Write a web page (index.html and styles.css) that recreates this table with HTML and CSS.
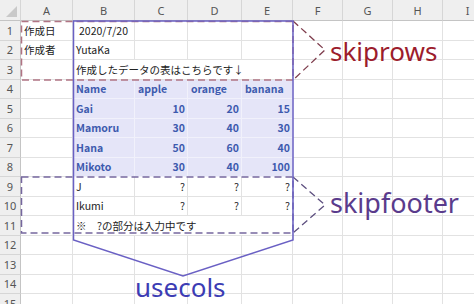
FILE: index.html
```html
<!DOCTYPE html>
<html lang="ja">
<head>
<meta charset="utf-8">
<link rel="stylesheet" href="styles.css">
</head>
<body>
<div class="wrap">
  <div class="sheet">
    <div class="ch corner"></div><div class="ch">A</div><div class="ch">B</div><div class="ch">C</div><div class="ch">D</div><div class="ch">E</div><div class="ch">F</div><div class="ch">G</div><div class="ch">H</div><div class="ch">I</div>

    <div class="rh">1</div><div class="c">作成日</div><div class="c date">2020/7/20</div><div class="c"></div><div class="c"></div><div class="c"></div><div class="c"></div><div class="c"></div><div class="c"></div><div class="c"></div>
    <div class="rh">2</div><div class="c">作成者</div><div class="c">YutaKa</div><div class="c"></div><div class="c"></div><div class="c"></div><div class="c"></div><div class="c"></div><div class="c"></div><div class="c"></div>
    <div class="rh">3</div><div class="c"></div><div class="c span4">作成したデータの表はこちらです↓</div><div class="c"></div><div class="c"></div><div class="c"></div><div class="c"></div>
    <div class="rh">4</div><div class="c"></div><div class="c t b">Name</div><div class="c t b">apple</div><div class="c t b">orange</div><div class="c t b">banana</div><div class="c"></div><div class="c"></div><div class="c"></div><div class="c"></div>
    <div class="rh">5</div><div class="c"></div><div class="c t b">Gai</div><div class="c t b r">10</div><div class="c t b r">20</div><div class="c t b r">15</div><div class="c"></div><div class="c"></div><div class="c"></div><div class="c"></div>
    <div class="rh">6</div><div class="c"></div><div class="c t b">Mamoru</div><div class="c t b r">30</div><div class="c t b r">40</div><div class="c t b r">30</div><div class="c"></div><div class="c"></div><div class="c"></div><div class="c"></div>
    <div class="rh">7</div><div class="c"></div><div class="c t b">Hana</div><div class="c t b r">50</div><div class="c t b r">60</div><div class="c t b r">40</div><div class="c"></div><div class="c"></div><div class="c"></div><div class="c"></div>
    <div class="rh">8</div><div class="c"></div><div class="c t b">Mikoto</div><div class="c t b r">30</div><div class="c t b r">40</div><div class="c t b r">100</div><div class="c"></div><div class="c"></div><div class="c"></div><div class="c"></div>
    <div class="rh">9</div><div class="c"></div><div class="c">J</div><div class="c r">?</div><div class="c r">?</div><div class="c r">?</div><div class="c"></div><div class="c"></div><div class="c"></div><div class="c"></div>
    <div class="rh">10</div><div class="c"></div><div class="c">Ikumi</div><div class="c r">?</div><div class="c r">?</div><div class="c r">?</div><div class="c"></div><div class="c"></div><div class="c"></div><div class="c"></div>
    <div class="rh">11</div><div class="c"></div><div class="c span4">※　?の部分は入力中です</div><div class="c"></div><div class="c"></div><div class="c"></div><div class="c"></div>
    <div class="rh">12</div><div class="c"></div><div class="c"></div><div class="c"></div><div class="c"></div><div class="c"></div><div class="c"></div><div class="c"></div><div class="c"></div><div class="c"></div>
    <div class="rh">13</div><div class="c"></div><div class="c"></div><div class="c"></div><div class="c"></div><div class="c"></div><div class="c"></div><div class="c"></div><div class="c"></div><div class="c"></div>
    <div class="rh">14</div><div class="c"></div><div class="c"></div><div class="c"></div><div class="c"></div><div class="c"></div><div class="c"></div><div class="c"></div><div class="c"></div><div class="c"></div>
    <div class="rh">15</div><div class="c"></div><div class="c"></div><div class="c"></div><div class="c"></div><div class="c"></div><div class="c"></div><div class="c"></div><div class="c"></div><div class="c"></div>
  </div>

  <svg class="marks" width="474" height="304" viewBox="0 0 474 304">
    <rect x="21.5" y="21.5" width="271.5" height="58.5" fill="none" stroke="#b07484" stroke-width="1.5" stroke-dasharray="7 4"/>
    <polyline points="293,21 325,50 293,80" fill="none" stroke="#7e3c4c" stroke-width="1.3" stroke-dasharray="7 4"/>
    <rect x="21.5" y="177" width="271.5" height="56" fill="none" stroke="#76679e" stroke-width="1.5" stroke-dasharray="7 4"/>
    <polyline points="293,177 325,205 293,233" fill="none" stroke="#5e5080" stroke-width="1.3" stroke-dasharray="7 4"/>
    <polygon points="73.5,21 293,21 293,240 183,276 73.5,240" fill="none" stroke="#6a60c4" stroke-width="1.5"/>
  </svg>

  <div class="label skiprows">skiprows</div>
  <div class="label skipfooter">skipfooter</div>
  <div class="label usecols">usecols</div>
</div>
</body>
</html>
```

FILE: styles.css
```css
html, body {
  margin: 0;
  padding: 0;
  background: #ffffff;
}

.wrap {
  position: relative;
  width: 474px;
  height: 304px;
  overflow: hidden;
}

.sheet {
  display: grid;
  grid-template-columns: 21px 52px 62px 53px 54px 51px 50px 50px 50px 50px;
  grid-template-rows: 21px repeat(15, 19.5px);
  font-family: "Noto Sans CJK JP", "Noto Sans", sans-serif;
  font-size: 10.5px;
  color: #222;
}

.ch {
  background: #efefef;
  border-right: 1px solid #d6d6d6;
  border-bottom: 1px solid #c4c4c4;
  box-sizing: border-box;
  display: flex;
  align-items: center;
  justify-content: center;
  font-family: "Noto Sans", sans-serif;
  font-size: 11px;
  color: #555;
}

.corner {
  position: relative;
}

.corner::after {
  content: "";
  position: absolute;
  right: 3px;
  bottom: 3px;
  width: 11px;
  height: 11px;
  background: #c9c9c9;
  clip-path: polygon(100% 0, 100% 100%, 0 100%);
}

.rh {
  background: #efefef;
  border-right: 1px solid #c4c4c4;
  border-bottom: 1px solid #d6d6d6;
  box-sizing: border-box;
  display: flex;
  align-items: center;
  justify-content: center;
  font-family: "Noto Sans", sans-serif;
  font-size: 11px;
  color: #555;
}

.c {
  border-right: 1px solid #e2e2e2;
  border-bottom: 1px solid #e2e2e2;
  box-sizing: border-box;
  display: flex;
  align-items: center;
  padding: 0 3px;
  white-space: nowrap;
  overflow: visible;
}

.date {
  padding-left: 6px;
}

.span4 {
  grid-column: span 4;
}

.t {
  background: #e5e5f8;
  border-right-color: #f1f1fb;
  border-bottom-color: #f1f1fb;
}

.b {
  font-weight: bold;
  color: #3d5aae;
  font-size: 10.5px;
}

.r {
  justify-content: flex-end;
  padding-right: 2px;
}

.marks {
  position: absolute;
  left: 0;
  top: 0;
}

.label {
  position: absolute;
  font-family: "Noto Sans", sans-serif;
  font-size: 26px;
  line-height: 1;
  white-space: nowrap;
}

.skiprows {
  left: 330px;
  top: 38px;
  color: #9c1c2c;
}

.skipfooter {
  left: 330px;
  top: 189px;
  font-size: 27px;
  color: #5a3b8c;
}

.usecols {
  left: 135px;
  top: 274px;
  color: #3c3cb4;
}
```
